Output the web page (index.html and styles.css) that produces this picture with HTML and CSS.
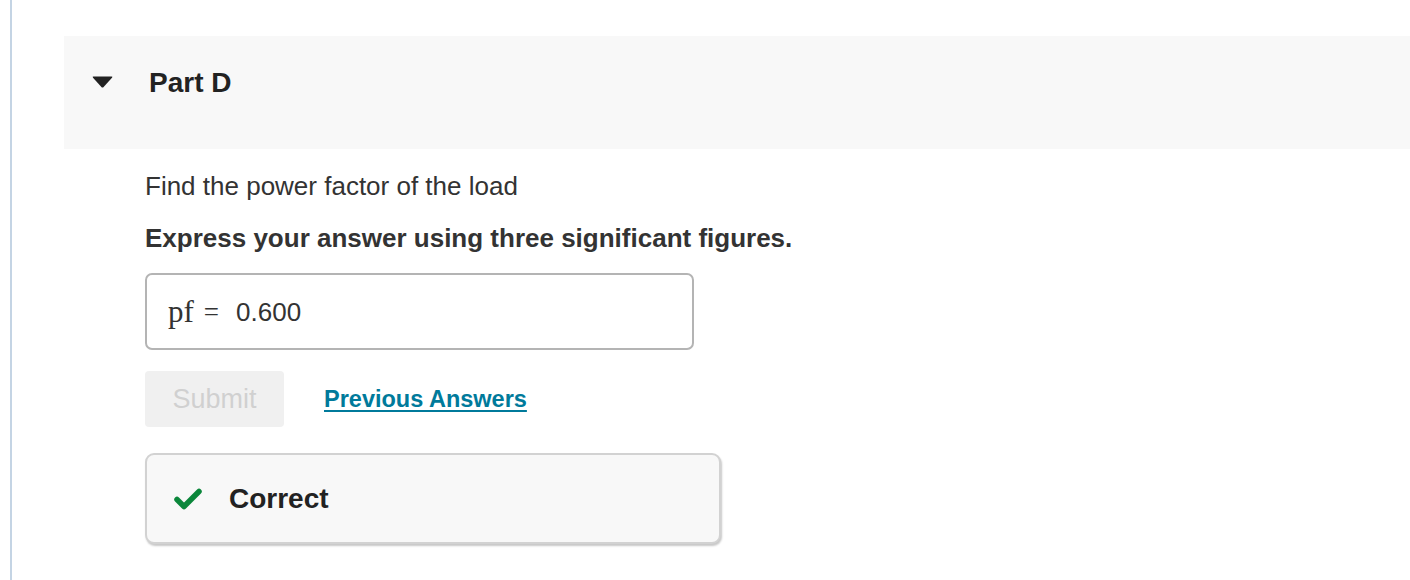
FILE: index.html
```html
<!DOCTYPE html>
<html lang="en">
<head>
<meta charset="utf-8">
<title>Part D</title>
<link rel="stylesheet" href="styles.css">
</head>
<body>
<div class="page">
  <section class="part">
    <div class="part-header">
      <svg class="caret" width="21" height="12" viewBox="0 0 21 12" aria-hidden="true">
        <path d="M1.5 0.5 H19.5 Q21 0.5 20 1.8 L11.6 11 Q10.5 12 9.4 11 L1 1.8 Q0 0.5 1.5 0.5 Z" fill="#222"/>
      </svg>
      <h2 class="part-title">Part D</h2>
    </div>
    <div class="part-body">
      <p class="prompt">Find the power factor of the load</p>
      <p class="instruction">Express your answer using three significant figures.</p>
      <div class="answer-box">
        <span class="var">pf</span><span class="eq">=</span><span class="value">0.600</span>
      </div>
      <div class="actions">
        <button class="submit" disabled>Submit</button>
        <a class="prev-link" href="#">Previous Answers</a>
      </div>
      <div class="feedback">
        <svg class="check" width="28" height="22" viewBox="0 0 28 22" aria-hidden="true">
          <path d="M3 11.5 L10 18.5 L25 3.5" fill="none" stroke="#0b873b" stroke-width="5.5" stroke-linecap="round" stroke-linejoin="round"/>
        </svg>
        <span class="feedback-text">Correct</span>
      </div>
    </div>
  </section>
</div>
</body>
</html>
```

FILE: styles.css
```css
html, body {
  margin: 0;
  padding: 0;
  background: #ffffff;
}

body {
  font-family: "Liberation Sans", Arial, Helvetica, sans-serif;
  color: #333333;
  height: 580px;
  overflow: hidden;
}

.page {
  margin-left: 10px;
  border-left: 2px solid #c4d4e4;
  min-height: 580px;
  padding-top: 36px;
  padding-left: 52px;
  box-sizing: border-box;
}

.part-header {
  display: flex;
  align-items: flex-start;
  background: #f8f8f8;
  height: 113px;
  box-sizing: border-box;
  padding-top: 31px;
  padding-left: 28px;
}

.caret {
  display: block;
  margin-top: 9px;
  flex: none;
}

.part-title {
  margin: 0 0 0 36px;
  font-size: 28px;
  line-height: 32px;
  font-weight: 700;
  color: #222222;
}

.part-body {
  padding-left: 81px;
}

.prompt {
  margin: 22px 0 0 0;
  font-size: 26px;
  line-height: 30px;
}

.instruction {
  margin: 22px 0 0 0;
  font-size: 26px;
  line-height: 30px;
  font-weight: 700;
}

.answer-box {
  margin-top: 20px;
  width: 549px;
  height: 77px;
  box-sizing: border-box;
  border: 2px solid #b4b4b4;
  border-radius: 7px;
  display: flex;
  align-items: center;
  padding-left: 21px;
  padding-top: 1px;
}

.var {
  font-family: "Liberation Serif", "Times New Roman", serif;
  font-size: 31px;
  color: #333333;
}

.eq {
  font-family: "Liberation Serif", "Times New Roman", serif;
  font-size: 27px;
  margin-left: 10px;
  color: #333333;
}

.value {
  font-size: 26px;
  margin-left: 17px;
  color: #333333;
}

.actions {
  margin-top: 21px;
  display: flex;
  align-items: center;
  gap: 40px;
}

.submit {
  width: 139px;
  height: 56px;
  border: none;
  border-radius: 4px;
  background: #f0f0f0;
  color: #d0d0d0;
  font-family: "Liberation Sans", Arial, Helvetica, sans-serif;
  font-size: 27px;
  padding: 0;
}

.prev-link {
  font-size: 23.5px;
  font-weight: 700;
  color: #007a9b;
  text-decoration: underline;
  text-decoration-thickness: 2px;
  text-underline-offset: 3px;
}

.feedback {
  margin-top: 26px;
  width: 576px;
  height: 91px;
  box-sizing: border-box;
  border: 2px solid #d2d2d2;
  border-radius: 9px;
  background: #f8f8f8;
  box-shadow: 1px 2px 2px rgba(0, 0, 0, 0.22);
  display: flex;
  align-items: center;
  padding-left: 27px;
}

.check {
  display: block;
  flex: none;
}

.feedback-text {
  margin-left: 27px;
  font-size: 28px;
  font-weight: 700;
  color: #222222;
}
```
